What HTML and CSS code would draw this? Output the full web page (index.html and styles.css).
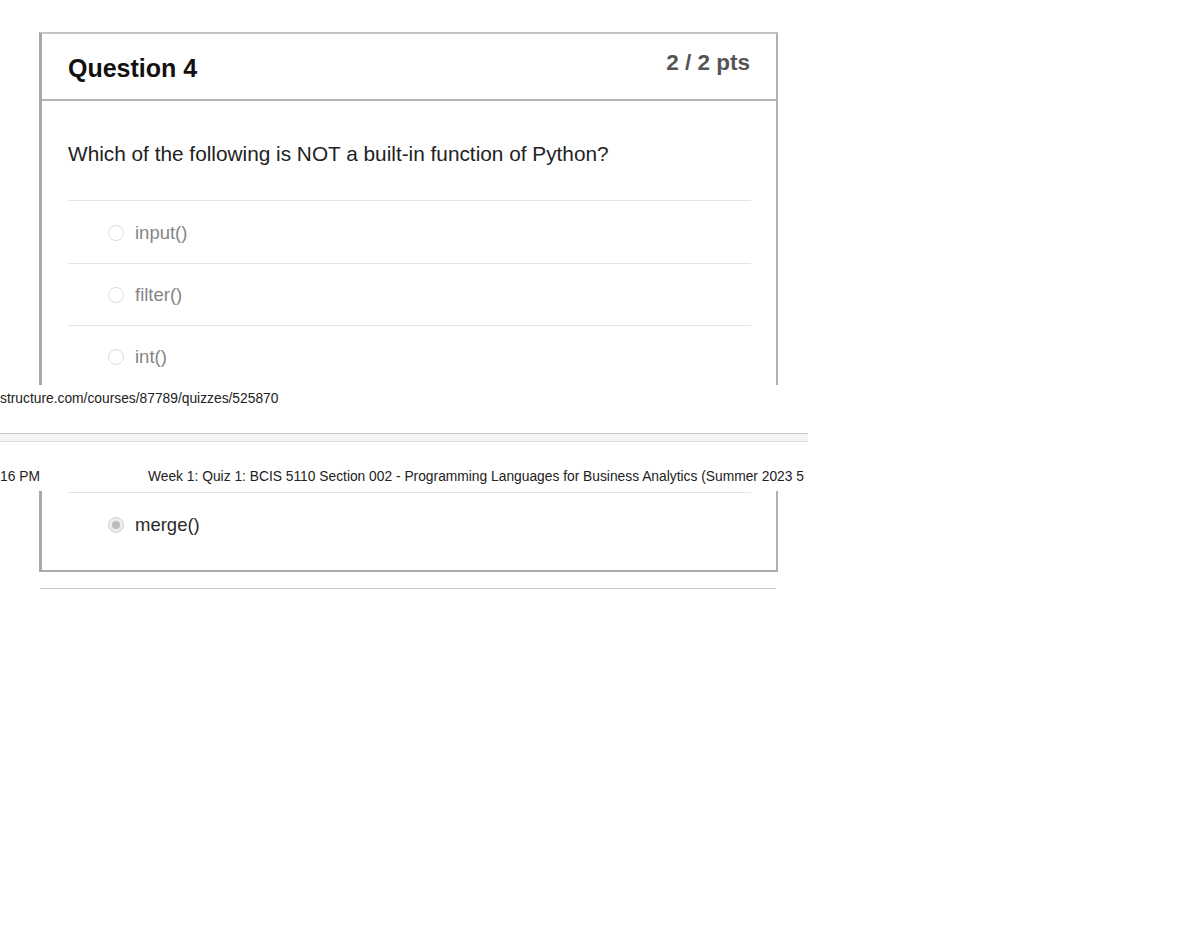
FILE: index.html
```html
<!DOCTYPE html>
<html lang="en">
<head>
<meta charset="utf-8">
<title>Week 1: Quiz 1</title>
<link rel="stylesheet" href="styles.css">
</head>
<body>
<div class="page">
  <section class="card card-top">
    <div class="q-header">
      <h2 class="q-title">Question 4</h2>
      <div class="q-pts">2 / 2 pts</div>
    </div>
    <div class="q-body">
      <p class="q-text">Which of the following is NOT a built-in function of Python?</p>
      <ul class="answers">
        <li class="answer"><span class="radio"></span><span class="label">input()</span></li>
        <li class="answer"><span class="radio"></span><span class="label">filter()</span></li>
        <li class="answer"><span class="radio"></span><span class="label">int()</span></li>
      </ul>
    </div>
  </section>

  <div class="print-footer">structure.com/courses/87789/quizzes/525870</div>
  <div class="page-gap"></div>
  <div class="print-header">
    <span class="stamp">16 PM</span>
    <span class="doc-title">Week 1: Quiz 1: BCIS 5110 Section 002 - Programming Languages for Business Analytics (Summer 2023 5</span>
  </div>

  <section class="card card-bottom">
    <ul class="answers">
      <li class="answer answer-chosen"><span class="radio radio-on"></span><span class="label">merge()</span></li>
    </ul>
  </section>
  <div class="next-rule"></div>
</div>
</body>
</html>
```

FILE: styles.css
```css
html, body {
  margin: 0;
  padding: 0;
  background: #ffffff;
}

.page {
  width: 808px;
  overflow: hidden;
  padding-top: 32px;
  font-family: "Liberation Sans", Arial, sans-serif;
  color: #222222;
}

.card {
  box-sizing: border-box;
  margin-left: 39px;
  width: 739px;
  border-left: 3px solid #a8a8a8;
  border-right: 2px solid #b0b0b0;
  background: #ffffff;
}

.card-top {
  height: 353px;
  border-top: 2px solid #c4c4c4;
  overflow: hidden;
}

.q-header {
  box-sizing: border-box;
  height: 67px;
  border-bottom: 2px solid #b4b4b4;
  display: flex;
  justify-content: space-between;
  align-items: flex-start;
  padding: 0 26px;
}

.q-title {
  margin: 0;
  padding-top: 22px;
  font-size: 25px;
  line-height: 25px;
  font-weight: bold;
  color: #111111;
}

.q-pts {
  padding-top: 18px;
  font-size: 22.5px;
  line-height: 22.5px;
  font-weight: bold;
  color: #555555;
}

.q-body {
  padding: 0 25px 0 26px;
}

.q-text {
  margin: 41px 0 0;
  font-size: 20.8px;
  line-height: 24px;
  color: #222222;
}

.answers {
  list-style: none;
  margin: 34px 0 0;
  padding: 0;
}

.answer {
  display: flex;
  align-items: center;
  height: 62px;
  border-top: 1px solid #e3e3e3;
  padding-left: 40px;
}

.answer + .answer {
  height: 61px;
}

.card-top .answer:first-child .radio,
.card-top .answer:first-child .label {
  margin-top: 1px;
}

.radio {
  box-sizing: border-box;
  width: 16px;
  height: 16px;
  border-radius: 50%;
  border: 1px solid #dedede;
  background: #ffffff;
  flex: none;
  display: flex;
  align-items: center;
  justify-content: center;
}

.radio-on {
  border-color: #d2d2d2;
  background: #ececec;
}

.radio-on::after {
  content: "";
  width: 8px;
  height: 8px;
  border-radius: 50%;
  background: #bcbcbc;
}

.label {
  margin-left: 11px;
  font-size: 18.5px;
  line-height: 22px;
  color: #858585;
}

.answer-chosen .label {
  color: #2a2a2a;
}

.print-footer {
  height: 48px;
  padding-top: 6px;
  box-sizing: border-box;
  font-size: 13.8px;
  line-height: 16px;
  color: #222222;
  white-space: nowrap;
}

.page-gap {
  box-sizing: border-box;
  height: 9px;
  border-top: 1px solid #c8c8c8;
  border-bottom: 1px solid #dcdcdc;
  background: #f3f3f3;
}

.print-header {
  box-sizing: border-box;
  height: 49px;
  padding-top: 27px;
  display: flex;
  font-size: 13.8px;
  line-height: 16px;
  color: #222222;
  white-space: nowrap;
}

.stamp {
  width: 148px;
  flex: none;
}

.doc-title {
  flex: none;
}

.card-bottom {
  padding: 1px 25px 13px 26px;
  border-bottom: 2px solid #aaaaaa;
}

.card-bottom .answers {
  margin: 0;
}

.card-bottom .answer {
  height: 64px;
}

.next-rule {
  margin: 16px 0 0 40px;
  width: 736px;
  height: 1px;
  background: #c8c8c8;
}
```
